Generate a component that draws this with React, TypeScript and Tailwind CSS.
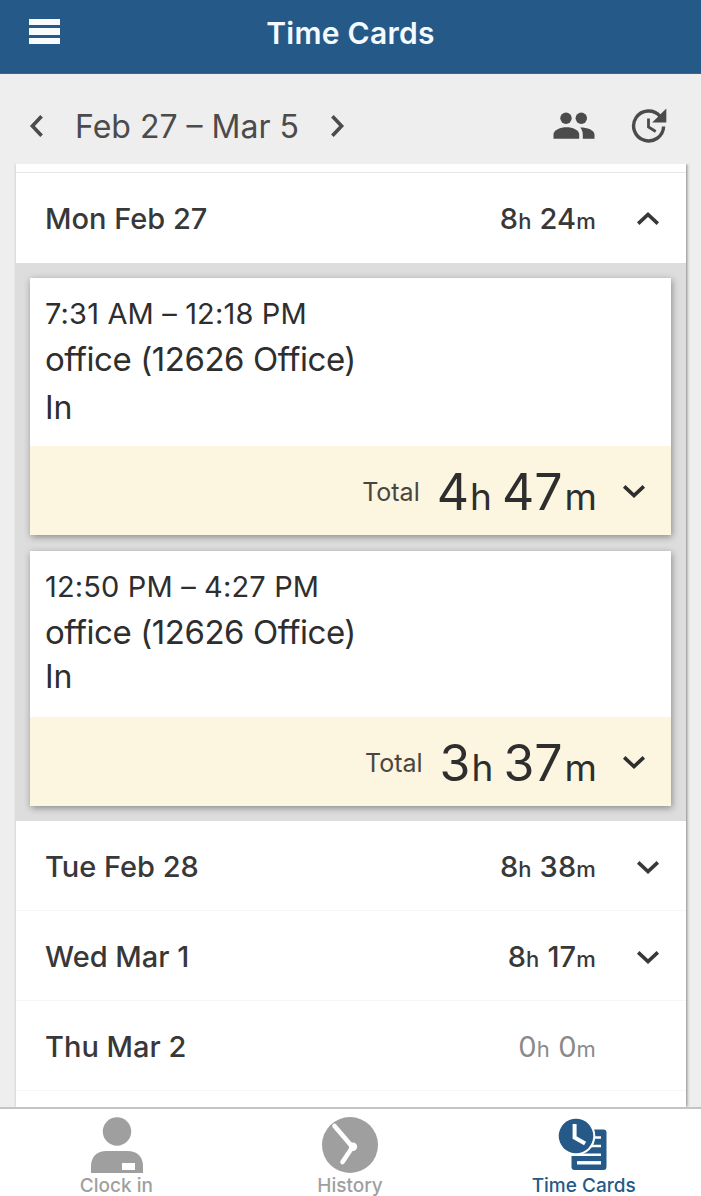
import React, { useState } from 'react';

interface Duration {
  hours: number;
  minutes: number;
}

interface Entry {
  range: string;
  job: string;
  status: string;
  total: Duration;
  statusClass: string;
  bodyClass: string;
}

interface Day {
  label: string;
  total: Duration;
  entries: Entry[];
}

const days: Day[] = [
  {
    label: 'Mon Feb 27',
    total: { hours: 8, minutes: 24 },
    entries: [
      {
        range: '7:31 AM – 12:18 PM',
        job: 'office (12626 Office)',
        status: 'In',
        total: { hours: 4, minutes: 47 },
        statusClass: 'leading-[52px]',
        bodyClass: 'h-[168px]',
      },
      {
        range: '12:50 PM – 4:27 PM',
        job: 'office (12626 Office)',
        status: 'In',
        total: { hours: 3, minutes: 37 },
        statusClass: 'leading-[43px]',
        bodyClass: 'h-[166px]',
      },
    ],
  },
  { label: 'Tue Feb 28', total: { hours: 8, minutes: 38 }, entries: [] },
  { label: 'Wed Mar 1', total: { hours: 8, minutes: 17 }, entries: [] },
  { label: 'Thu Mar 2', total: { hours: 0, minutes: 0 }, entries: [] },
];

const Chevron: React.FC<{ className?: string }> = ({ className = '' }) => (
  <svg viewBox="0 0 24 16" className={`w-6 h-4 shrink-0 ${className}`} fill="none" stroke="currentColor" strokeWidth="3.6">
    <path d="M2.2 3.4 12 12.6l9.8-9.2" />
  </svg>
);

const PeopleIcon = () => (
  <svg viewBox="0 0 42 28" className="w-[42px] h-7" fill="currentColor">
    <circle cx="13" cy="6.2" r="5.7" />
    <circle cx="28.3" cy="6.2" r="5.7" />
    <path d="M0.5 26.8v-4.3c0-4.6 7-7.2 13-7.2s12.7 2.6 12.7 7.2v4.3z" />
    <path d="M27.2 15.4c7.2 0 14.3 2.6 14.3 7.1v4.3H29.8v-4.3c0-3.3-1.2-5.5-2.6-7.1z" />
  </svg>
);

const UpdateIcon = () => (
  <svg viewBox="0 0 36 36" className="w-9 h-9" fill="none" stroke="currentColor">
    <path d="M29 8.2A15 15 0 1 0 32.6 18.5" strokeWidth="3.4" />
    <path d="M35.3 0.6v14H21.2z" fill="currentColor" stroke="none" />
    <path d="M17.5 10.5v8.5l7.2 4.5" strokeWidth="2.8" />
  </svg>
);

const ClockInIcon = () => (
  <svg viewBox="0 0 52 56" className="w-[52px] h-14 ml-0.5">
    <circle cx="26" cy="14.5" r="14.2" fill="currentColor" />
    <path d="M0 56V49C0 39 7 34 15 34h22c8 0 15 5 15 15v7z" fill="currentColor" />
    <rect x="31" y="46" width="13" height="7" fill="#fff" />
  </svg>
);

const HistoryIcon = () => (
  <svg viewBox="0 0 56 56" className="w-14 h-14">
    <circle cx="28" cy="28" r="28" fill="currentColor" />
    <path d="M12.5 9 30.5 30 20.5 45" fill="none" stroke="#fff" strokeWidth="4.6" strokeLinecap="round" strokeLinejoin="round" />
    <circle cx="31" cy="29.8" r="4.2" fill="#fff" />
  </svg>
);

const TimeCardsIcon = () => (
  <svg viewBox="0 0 50 54" className="w-[50px] h-[54px] mr-0.5">
    <rect x="13.5" y="11.5" width="35" height="40.5" rx="3" fill="currentColor" />
    <path d="M30 19.5h13M30 28h13M10 36.8h33" stroke="#fff" strokeWidth="2.6" />
    <path d="M19 44.8h24" stroke="#fff" strokeWidth="3.4" />
    <circle cx="18" cy="18" r="19.3" fill="#fff" />
    <circle cx="18" cy="18" r="17.3" fill="currentColor" />
    <path d="M16.6 6v13.5l10.5 6" fill="none" stroke="#fff" strokeWidth="4" />
  </svg>
);

const DayTotal: React.FC<{ value: Duration }> = ({ value }) => (
  <span className="ml-auto mr-10 text-[29px] leading-9 tracking-[0.15px]">
    {value.hours}
    <span className="text-[22px] leading-none">h</span> {value.minutes}
    <span className="text-[22px] leading-none">m</span>
  </span>
);

const EntryCard: React.FC<{ entry: Entry }> = ({ entry }) => (
  <div className="bg-white text-[#2e2e2e] shadow-[1px_2px_7px_rgba(0,0,0,0.38)]">
    <div className={`pt-3 pl-[15px] ${entry.bodyClass}`}>
      <p className="text-[29px] leading-[47px] tracking-[0.15px]">{entry.range}</p>
      <p className="text-[33px] leading-[45px] tracking-[-0.45px]">{entry.job}</p>
      <p className={`text-[32px] ${entry.statusClass}`}>{entry.status}</p>
    </div>
    <div className="h-[89px] bg-[#fcf5e0] flex items-center justify-end pr-[25px]">
      <span className="text-[25px] leading-8 text-[#48463f] mt-[3px] mr-[17px]">Total</span>
      <span className="text-[50px] leading-[60px] mt-0.5 mr-[25px] [word-spacing:-4px]">
        {entry.total.hours}
        <span className="text-[37px] leading-none ml-px">h</span> {entry.total.minutes}
        <span className="text-[37px] leading-none ml-0.5">m</span>
      </span>
      <Chevron />
    </div>
  </div>
);

const tabs = [
  { name: 'Clock in', Icon: ClockInIcon },
  { name: 'History', Icon: HistoryIcon },
  { name: 'Time Cards', Icon: TimeCardsIcon },
];

const App: React.FC = () => {
  const [openDay, setOpenDay] = useState('Mon Feb 27');
  const [activeTab, setActiveTab] = useState('Time Cards');

  return (
    <div className="w-full h-[1196px] flex flex-col overflow-hidden bg-[#eeeeee] font-['Inter',sans-serif]">
      {/* Header */}
      <header className="h-[74px] shrink-0 bg-[#255a88] border-b border-[#3d6789] grid grid-cols-[1fr_auto_1fr] items-start">
        <button className="flex flex-col gap-[3px] w-[31px] ml-[29px] mt-[18.5px]">
          <span className="h-[6.5px] w-full bg-[#f8fcff]" />
          <span className="h-[6.5px] w-full bg-[#f8fcff]" />
          <span className="h-[6.5px] w-full bg-[#f8fcff]" />
        </button>
        <h1 className="text-[30px] leading-[66px] font-semibold tracking-[0.3px] text-[#f4faff]">Time Cards</h1>
      </header>

      {/* Week picker */}
      <div className="h-[90px] shrink-0 flex items-center pt-[14px] pl-[25px] pr-[34px] text-[#4b4b4b]">
        <Chevron className="rotate-90" />
        <span className="text-[32px] mt-0.5 ml-[26px] mr-[26px]">Feb 27 – Mar 5</span>
        <Chevron className="-rotate-90" />
        <div className="ml-auto flex items-center gap-9">
          <PeopleIcon />
          <UpdateIcon />
        </div>
      </div>

      {/* Day list */}
      <main className="flex-1 min-h-0 overflow-hidden ml-4 mr-[15px] bg-white shadow-[1px_0_3px_rgba(0,0,0,0.45)] [clip-path:inset(0_-6px)]">
        <div className="h-[9px] border-b border-[#e6e6e6]" />
        {days.map((day) => {
          const open = day.label === openDay && day.entries.length > 0;
          const empty = day.total.hours === 0 && day.total.minutes === 0;
          return (
            <section key={day.label}>
              <button
                onClick={() => setOpenDay(open ? '' : day.label)}
                className={`w-full h-[90px] flex items-center pl-[29px] pr-[26px] font-medium text-[#383838] ${open ? 'pt-px' : 'pt-[3px] border-b border-[#f6f6f6]'}`}
              >
                <span className="text-[29px] leading-9">{day.label}</span>
                {empty ? (
                  <span className="flex ml-auto mr-6 text-[#8a8a8a] font-normal"><DayTotal value={day.total} /></span>
                ) : (
                  <>
                    <DayTotal value={day.total} />
                    <Chevron className={open ? 'rotate-180' : ''} />
                  </>
                )}
              </button>
              {open && (
                <div className="bg-[#dddddd] pl-[14px] pr-[15px] py-[15px] flex flex-col gap-4">
                  {day.entries.map((entry) => (
                    <EntryCard key={entry.range} entry={entry} />
                  ))}
                </div>
              )}
            </section>
          );
        })}
      </main>

      {/* Tab bar */}
      <nav className="h-[89px] shrink-0 bg-white border-t-2 border-[#c4c4c4] grid grid-cols-3">
        {tabs.map(({ name, Icon }) => (
          <button
            key={name}
            onClick={() => setActiveTab(name)}
            className={`flex flex-col items-center pt-2 pr-px font-medium ${activeTab === name ? 'text-[#255a88]' : 'text-[#9f9f9f]'}`}
          >
            <span className="h-14 flex items-center"><Icon /></span>
            <span className="text-[19px] leading-5 mt-[3px]">{name}</span>
          </button>
        ))}
      </nav>
    </div>
  );
};

export default App;
